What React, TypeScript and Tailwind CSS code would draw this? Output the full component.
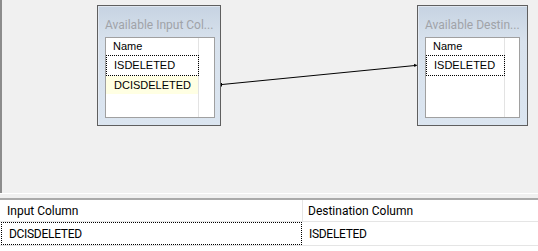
import React from "react";

function ColumnBox({
  left,
  width,
  title,
  listWidth,
  rowWidth,
  rows,
}: {
  left: number;
  width: number;
  title: string;
  listWidth: number;
  rowWidth: number;
  rows: { text: string; kind: "focus" | "hover" }[];
}) {
  return (
    <div
      className="absolute top-[5px] h-[121px] border border-[#5f5f5f] bg-gradient-to-b from-[#c6d3e2] via-[#d8e2ed] via-30% to-[#dbe5f0]"
      style={{ left, width }}
    >
      <div className="h-full border-l border-t border-[#e9eef5]/70">
        <div className="h-[30px] pl-[6px] pt-[11px] text-[12px] leading-[14px] text-[#a0a3a8] whitespace-nowrap overflow-hidden font-['Roboto',sans-serif]">
          {title}
        </div>
        <div
          className="relative ml-[6px] h-[81px] border border-[#a0a0a0] bg-white font-['Liberation_Sans',sans-serif] text-[11px] text-black"
          style={{ width: listWidth }}
        >
          <div
            className="absolute top-0 bottom-0 w-px bg-[#e3e3e3]"
            style={{ left: rowWidth - 1 }}
          />
          <div className="h-[17px] pl-[7px] flex items-center">Name</div>
          {rows.map((r) =>
            r.kind === "focus" ? (
              <div
                key={r.text}
                className="relative h-[21px] border border-dotted border-black pl-[7px] flex items-center"
                style={{ width: rowWidth }}
              >
                {r.text}
              </div>
            ) : (
              <div
                key={r.text}
                className="h-[18px] bg-[#ffffe3] pl-[8px] flex items-center"
                style={{ width: rowWidth - 1 }}
              >
                {r.text}
              </div>
            )
          )}
        </div>
      </div>
    </div>
  );
}

export default function App() {
  return (
    <div className="w-[538px] h-[251px] overflow-hidden bg-white flex flex-col">
      <div className="relative h-[193px] shrink-0 bg-[#f0f0f0] border-l-2 border-[#8c8c8c]">
        <svg className="absolute left-0 top-0" width="536" height="193">
          <line x1="220" y1="84.5" x2="413" y2="65.5" stroke="#000" strokeWidth="1" />
          <polygon points="415.5,65.3 412,63.8 412.3,66.9" fill="#000" />
          <line x1="219.5" y1="83" x2="219.5" y2="86.5" stroke="#000" strokeWidth="1" />
        </svg>
        <ColumnBox
          left={95}
          width={124}
          title="Available Input Col..."
          listWidth={110}
          rowWidth={93}
          rows={[
            { text: "ISDELETED", kind: "focus" },
            { text: "DCISDELETED", kind: "hover" },
          ]}
        />
        <ColumnBox
          left={415}
          width={111}
          title="Available Destin..."
          listWidth={95}
          rowWidth={79}
          rows={[{ text: "ISDELETED", kind: "focus" }]}
        />
      </div>
      <div className="h-[7px] shrink-0 bg-[#f0f0f0] border-t border-t-white border-b-2 border-b-[#aaaaaa]" />
      <div className="font-['Roboto',sans-serif] text-[12px] text-black">
        <div className="flex h-[22px] border-b border-[#e5e5e5]">
          <div className="w-[302px] pl-[7px] flex items-center">Input Column</div>
          <div className="flex-1 border-l border-[#e5e5e5] pl-[5px] flex items-center">
            Destination Column
          </div>
        </div>
        <div className="flex h-[24px] border-b border-[#e5e5e5]">
          <div className="w-[302px] pl-px">
            <div className="w-[301px] h-[23px] border border-dotted border-black pl-[7px] flex items-center tracking-[-0.3px]">
              DCISDELETED
            </div>
          </div>
          <div className="flex-1 pl-[7px] flex items-center tracking-[-0.3px]">ISDELETED</div>
        </div>
      </div>
    </div>
  );
}
